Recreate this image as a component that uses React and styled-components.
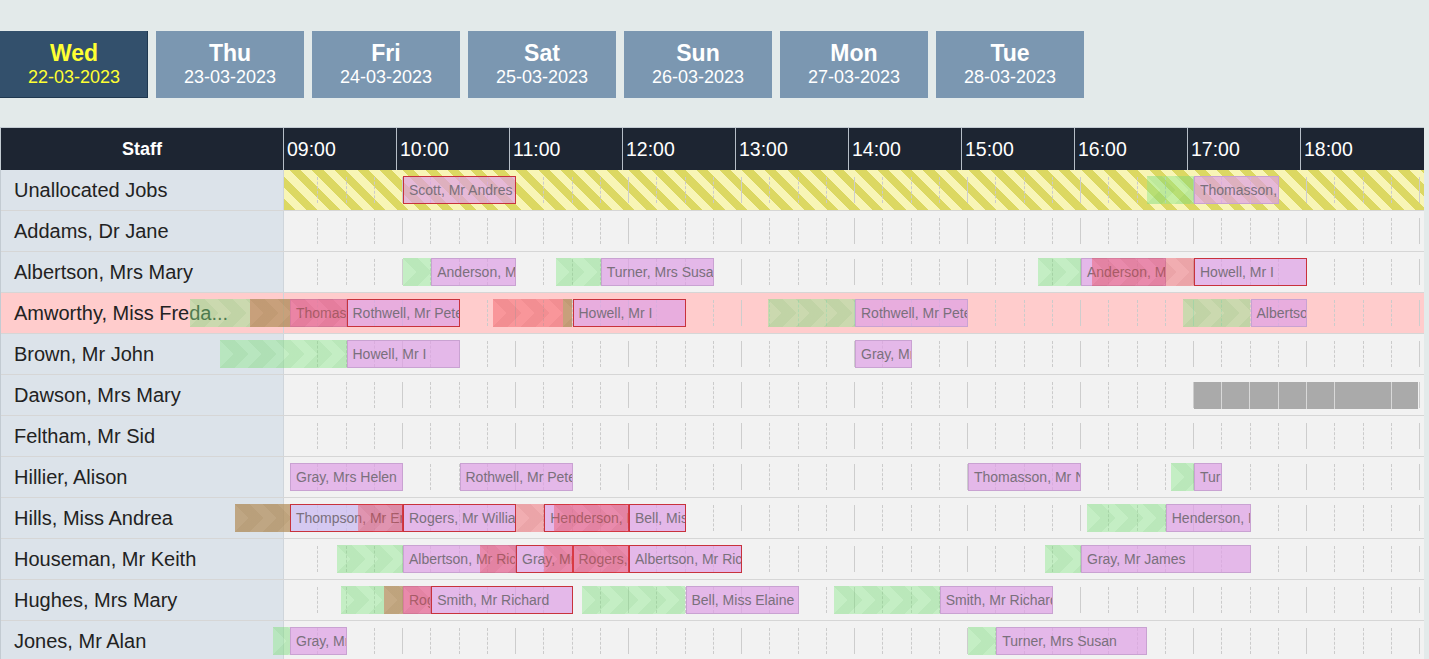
import React from 'react';
import styled, { createGlobalStyle, css } from 'styled-components';

// timeline scale
const HOUR = 113;
const START = 9;
const ORIGIN = 6; // px from track edge to 09:00
const QUARTERS = 40;

const minutes = t => {
  const [h, m] = t.split(':').map(Number);
  return (h - START) * 60 + m;
};
const xOf = t => ORIGIN + (minutes(t) * HOUR) / 60;
const span = (from, to) => ({ left: xOf(from), width: xOf(to) - xOf(from) });

const days = [
  { name: 'Wed', date: '22-03-2023', active: true },
  { name: 'Thu', date: '23-03-2023' },
  { name: 'Fri', date: '24-03-2023' },
  { name: 'Sat', date: '25-03-2023' },
  { name: 'Sun', date: '26-03-2023' },
  { name: 'Mon', date: '27-03-2023' },
  { name: 'Tue', date: '28-03-2023' },
];

const hours = ['09:00', '10:00', '11:00', '12:00', '13:00', '14:00', '15:00', '16:00', '17:00', '18:00'];

const staff = [
  {
    name: 'Unallocated Jobs',
    tone: 'pool',
    items: [
      { job: 'Scott, Mr Andres', from: '10:00', to: '11:00', flag: true },
      { travel: 'go', from: '16:35', to: '17:00' },
      { job: 'Thomasson, Mr Neil', from: '17:00', to: '17:45' },
    ],
  },
  { name: 'Addams, Dr Jane', items: [] },
  {
    name: 'Albertson, Mrs Mary',
    items: [
      { travel: 'go', from: '10:00', to: '10:15' },
      { job: 'Anderson, Mr Paul', from: '10:15', to: '11:00' },
      { travel: 'go', from: '11:21', to: '11:45' },
      { job: 'Turner, Mrs Susan', from: '11:45', to: '12:45' },
      { travel: 'go', from: '15:37', to: '16:00' },
      { job: 'Anderson, Mr Paul', from: '16:00', to: '16:45' },
      { travel: 'late', from: '16:06', to: '17:00' },
      { job: 'Howell, Mr I', from: '17:00', to: '18:00', flag: true },
    ],
  },
  {
    name: 'Amworthy, Miss Freda...',
    tone: 'alert',
    items: [
      { travel: 'go', from: '08:07', to: '08:39' },
      { travel: 'clash', from: '08:39', to: '09:00' },
      { job: 'Thomasson, Mr Neil', from: '09:00', to: '09:30' },
      { travel: 'late', from: '09:00', to: '09:30' },
      { job: 'Rothwell, Mr Peter', from: '09:30', to: '10:30', flag: true },
      { travel: 'late', from: '10:48', to: '11:25' },
      { travel: 'clash', from: '11:25', to: '11:30' },
      { job: 'Howell, Mr I', from: '11:30', to: '12:30', flag: true },
      { travel: 'go', from: '13:14', to: '14:00' },
      { job: 'Rothwell, Mr Peter', from: '14:00', to: '15:00' },
      { travel: 'go', from: '16:54', to: '17:30' },
      { job: 'Albertson, Mr Richard', from: '17:30', to: '18:00' },
    ],
  },
  {
    name: 'Brown, Mr John',
    items: [
      { travel: 'go', from: '08:23', to: '09:30' },
      { job: 'Howell, Mr I', from: '09:30', to: '10:30' },
      { job: 'Gray, Mr James', from: '14:00', to: '14:30' },
    ],
  },
  {
    name: 'Dawson, Mrs Mary',
    items: [{ blocked: true, from: '17:00', to: '18:59' }],
  },
  { name: 'Feltham, Mr Sid', items: [] },
  {
    name: 'Hillier, Alison',
    items: [
      { job: 'Gray, Mrs Helen', from: '09:00', to: '10:00' },
      { job: 'Rothwell, Mr Peter', from: '10:30', to: '11:30' },
      { job: 'Thomasson, Mr Neil', from: '15:00', to: '16:00' },
      { travel: 'go', from: '16:48', to: '17:00' },
      { job: 'Turner, Mrs Susan', from: '17:00', to: '17:15' },
    ],
  },
  {
    name: 'Hills, Miss Andrea',
    items: [
      { travel: 'clash', from: '08:31', to: '09:00' },
      { job: 'Thompson, Mr Eric', from: '09:00', to: '10:00', flag: true, lilac: true },
      { travel: 'late', from: '09:36', to: '10:00' },
      { job: 'Rogers, Mr William', from: '10:00', to: '11:00', flag: true },
      { travel: 'late', from: '11:00', to: '11:15' },
      { job: 'Henderson, Mr Ian', from: '11:15', to: '12:00', flag: true },
      { travel: 'late', from: '11:20', to: '12:00' },
      { job: 'Bell, Miss Elaine', from: '12:00', to: '12:30', flag: true },
      { travel: 'go', from: '16:03', to: '16:45' },
      { job: 'Henderson, Mr Ian', from: '16:45', to: '17:30' },
    ],
  },
  {
    name: 'Houseman, Mr Keith',
    items: [
      { travel: 'go', from: '09:25', to: '10:00' },
      { job: 'Albertson, Mr Richard', from: '10:00', to: '11:00' },
      { travel: 'late', from: '10:41', to: '11:00' },
      { job: 'Gray, Mr James', from: '11:00', to: '11:30', flag: true },
      { travel: 'late', from: '11:15', to: '11:30' },
      { job: 'Rogers, Mr William', from: '11:30', to: '12:00', flag: true },
      { travel: 'late', from: '11:30', to: '12:00' },
      { job: 'Albertson, Mr Richard', from: '12:00', to: '13:00', flag: true },
      { travel: 'go', from: '15:41', to: '16:00' },
      { job: 'Gray, Mr James', from: '16:00', to: '17:30' },
    ],
  },
  {
    name: 'Hughes, Mrs Mary',
    items: [
      { travel: 'go', from: '09:27', to: '09:50' },
      { travel: 'clash', from: '09:50', to: '10:00' },
      { job: 'Rogers, Mr William', from: '10:00', to: '10:15' },
      { travel: 'late', from: '10:00', to: '10:15' },
      { job: 'Smith, Mr Richard', from: '10:15', to: '11:30', flag: true },
      { travel: 'go', from: '11:35', to: '12:30' },
      { job: 'Bell, Miss Elaine', from: '12:30', to: '13:30' },
      { travel: 'go', from: '13:49', to: '14:45' },
      { job: 'Smith, Mr Richard', from: '14:45', to: '15:45' },
    ],
  },
  {
    name: 'Jones, Mr Alan',
    items: [
      { travel: 'go', from: '08:51', to: '09:00' },
      { job: 'Gray, Mr James', from: '09:00', to: '09:30' },
      { travel: 'go', from: '15:00', to: '15:15' },
      { job: 'Turner, Mrs Susan', from: '15:15', to: '16:35' },
    ],
  },
];

const GlobalStyle = createGlobalStyle`
  body {
    margin: 0;
    background: #e3eaea;
    font-family: "Liberation Sans", Arial, sans-serif;
    overflow: hidden;
  }
`;

const Page = styled.div`
  padding-top: 31px;
`;

const DayTabs = styled.div`
  display: flex;
  gap: 8px;
  margin-bottom: 29px;
`;

const DayTab = styled.div`
  width: 148px;
  height: 67px;
  display: flex;
  flex-direction: column;
  align-items: center;
  justify-content: center;
  background: ${p => (p.$active ? '#33506c' : '#7b97b1')};
  color: ${p => (p.$active ? '#ffff33' : '#ffffff')};
  box-shadow: ${p => (p.$active ? 'inset -1px -1px 0 #1f3850' : 'none')};
`;

const DayName = styled.div`
  font-size: 23px;
  font-weight: bold;
  line-height: 25px;
`;

const DayDate = styled.div`
  font-size: 18px;
  line-height: 22px;
`;

const Board = styled.div`
  width: 1424px;
  box-sizing: border-box;
  border-top: 1px solid #c3cbd2;
  border-left: 1px solid #c3cbd2;
`;

const HeaderRow = styled.div`
  display: grid;
  grid-template-columns: 283px repeat(9, 113px) 1fr;
  height: 42px;
  background: #1d2532;
`;

const HeaderCell = styled.div`
  display: flex;
  align-items: center;
  justify-content: ${p => (p.$staff ? 'center' : 'flex-start')};
  padding-left: ${p => (p.$staff ? 0 : 3)}px;
  border-right: 1px solid #b6bec7;
  color: #fff;
  font-size: ${p => (p.$staff ? 18 : 19.5)}px;
  font-weight: ${p => (p.$staff ? 'bold' : 'normal')};
  &:last-child {
    border-right: none;
  }
`;

const Row = styled.div`
  display: grid;
  grid-template-columns: 283px 1fr;
  height: 41px;
  box-sizing: border-box;
  border-bottom: 1px solid #d6d6d6;
  background: ${p => (p.$tone === 'alert' ? '#ffcccc' : '#f2f2f2')};
`;

const StaffCell = styled.div`
  background: ${p => (p.$tone === 'alert' ? '#ffcccc' : '#dce3ea')};
  border-right: 1px solid #cfd5db;
  padding-left: 13px;
  font-size: 20px;
  line-height: 41px;
  color: #222;
  white-space: nowrap;
  overflow: hidden;
`;

const Track = styled.div`
  position: relative;
  display: flex;
  padding-left: ${ORIGIN}px;
  ${p =>
    p.$tone === 'pool' &&
    css`
      background: repeating-linear-gradient(45deg, #dcd862 0 8px, #f8f5b6 8px 16px);
    `}
`;

const Tick = styled.div`
  flex: none;
  width: ${HOUR / 4}px;
  box-sizing: border-box;
  margin: 7px 0;
  border-right: 1px ${p => (p.$hour ? 'solid #cdcdcd' : 'dashed #cbcbcb')};
`;

const chevrons = ink => css`
  background-image: linear-gradient(45deg, transparent 33.3%, ${ink} 33.3% 66.7%, transparent 66.7%),
    linear-gradient(135deg, transparent 33.3%, ${ink} 33.3% 66.7%, transparent 66.7%);
  background-size: 28px 14px;
  background-position: 0 0, 0 14px;
  background-repeat: repeat-x;
`;

const travelTones = {
  go: css`
    background-color: rgba(140, 232, 140, 0.45);
    ${chevrons('rgba(0, 110, 0, 0.05)')}
  `,
  late: css`
    background-color: rgba(240, 70, 80, 0.4);
    ${chevrons('rgba(120, 0, 0, 0.05)')}
  `,
  clash: css`
    background-color: rgba(182, 146, 96, 0.75);
    ${chevrons('rgba(90, 60, 0, 0.06)')}
  `,
};

const Travel = styled.div`
  position: absolute;
  top: 6px;
  height: 28px;
  ${p => travelTones[p.$tone]}
`;

const Job = styled.div`
  position: absolute;
  top: 6px;
  height: 28px;
  box-sizing: border-box;
  padding-left: 5px;
  border: 1px solid ${p => (p.$flag ? '#c8323c' : '#c9a2d2')};
  background: ${p => (p.$lilac ? 'rgba(205, 190, 240, 0.8)' : 'rgba(222, 160, 230, 0.7)')};
  color: #7a707c;
  font-size: 14px;
  line-height: 26px;
  white-space: nowrap;
  overflow: hidden;
`;

const Blocked = styled.div`
  position: absolute;
  top: 7px;
  height: 27px;
  background: #aaaaaa
    repeating-linear-gradient(90deg, transparent 0 ${HOUR / 4 - 1}px, rgba(255, 255, 255, 0.55) ${HOUR / 4 - 1}px ${HOUR / 4}px);
`;

function Item({ item }) {
  const box = span(item.from, item.to);
  if (item.blocked) return <Blocked style={box} />;
  if (item.travel) return <Travel $tone={item.travel} style={box} />;
  return (
    <Job $flag={item.flag} $lilac={item.lilac} style={box}>
      {item.job}
    </Job>
  );
}

export default function App() {
  return (
    <Page>
      <GlobalStyle />
      <DayTabs>
        {days.map(d => (
          <DayTab key={d.name} $active={d.active}>
            <DayName>{d.name}</DayName>
            <DayDate>{d.date}</DayDate>
          </DayTab>
        ))}
      </DayTabs>
      <Board>
        <HeaderRow>
          <HeaderCell $staff>Staff</HeaderCell>
          {hours.map(h => (
            <HeaderCell key={h}>{h}</HeaderCell>
          ))}
        </HeaderRow>
        {staff.map(s => (
          <Row key={s.name} $tone={s.tone}>
            <StaffCell $tone={s.tone}>{s.name}</StaffCell>
            <Track $tone={s.tone}>
              {Array.from({ length: QUARTERS }, (_, i) => (
                <Tick key={i} $hour={i % 4 === 3} />
              ))}
              {s.items.map((it, i) => (
                <Item key={i} item={it} />
              ))}
            </Track>
          </Row>
        ))}
      </Board>
    </Page>
  );
}
